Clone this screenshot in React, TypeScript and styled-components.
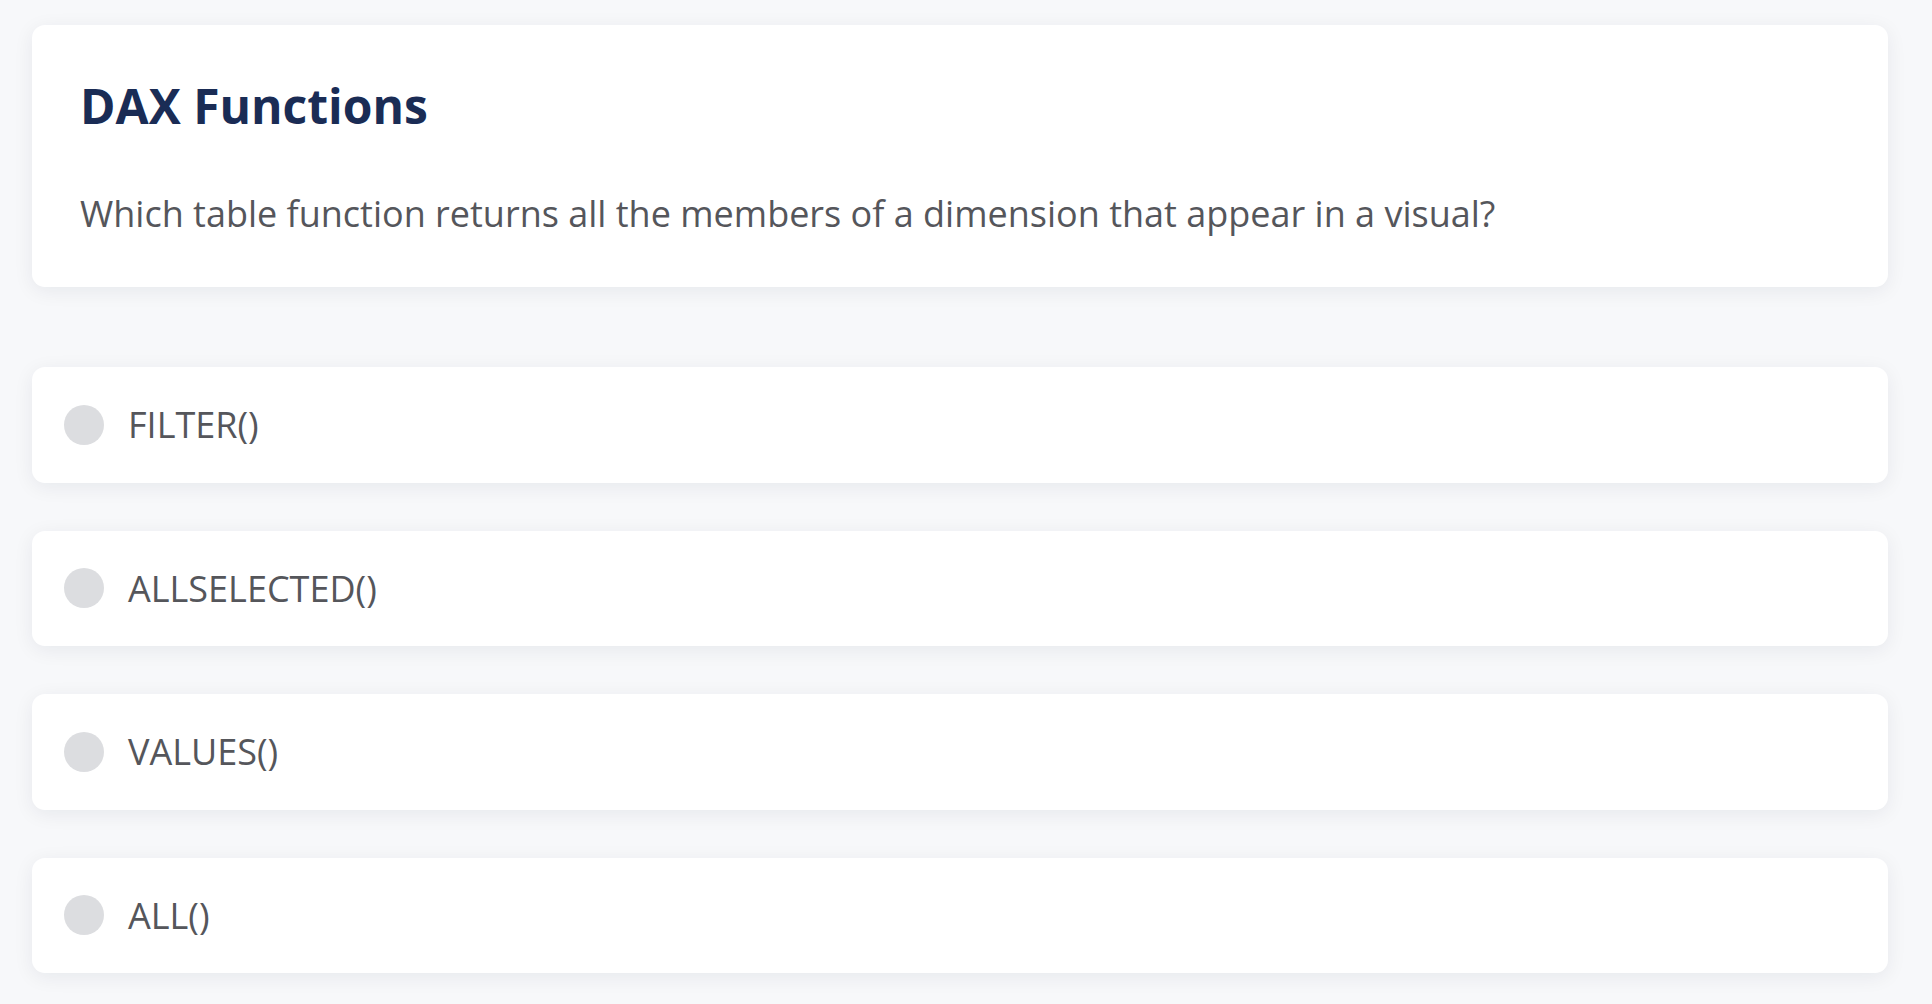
import styled, { createGlobalStyle } from "styled-components";

const options = ["FILTER()", "ALLSELECTED()", "VALUES()", "ALL()"];

const GlobalStyle = createGlobalStyle`
  body {
    margin: 0;
    background: #f7f8fa;
    font-family: "Open Sans", "Noto Sans", sans-serif;
  }
`;

const App = () => {
  return (
    <>
      <GlobalStyle />
      <Page>
        <QuestionCard>
          <Title>DAX Functions</Title>
          <QuestionText>
            Which table function returns all the members of a dimension that appear in a visual?
          </QuestionText>
        </QuestionCard>
        <OptionList>
          {options.map((option) => (
            <OptionCard key={option}>
              <Radio />
              <OptionLabel>{option}</OptionLabel>
            </OptionCard>
          ))}
        </OptionList>
      </Page>
    </>
  );
};

export default App;

const Page = styled.div`
  display: flex;
  flex-direction: column;
  gap: 80px;
  padding: 25px 44px 40px 32px;
  box-sizing: border-box;
`;

const QuestionCard = styled.div`
  background: #fff;
  border-radius: 13px;
  padding: 51px 48px 45.5px 48px;
  box-shadow: 0px 4px 20px 0px rgba(20, 30, 60, 0.07);
  display: flex;
  flex-direction: column;
  gap: 50px;
`;

const Title = styled.h1`
  margin: 0;
  color: #1a2c55;
  font-size: 48px;
  font-weight: 700;
  line-height: 60px;
`;

const QuestionText = styled.p`
  margin: 0;
  color: #55565b;
  font-size: 36px;
  font-weight: 400;
  line-height: 55.5px;
`;

const OptionList = styled.div`
  display: flex;
  flex-direction: column;
  gap: 48px;
`;

const OptionCard = styled.div`
  height: 115.5px;
  background: #fff;
  border-radius: 13px;
  padding: 0 32px;
  box-shadow: 0px 4px 20px 0px rgba(20, 30, 60, 0.07);
  display: flex;
  align-items: center;
  gap: 24px;
  cursor: pointer;
`;

const Radio = styled.span`
  width: 40px;
  height: 40px;
  flex-shrink: 0;
  border-radius: 50%;
  background: #dcdde0;
`;

const OptionLabel = styled.span`
  color: #55565b;
  font-size: 36px;
  font-weight: 400;
`;
